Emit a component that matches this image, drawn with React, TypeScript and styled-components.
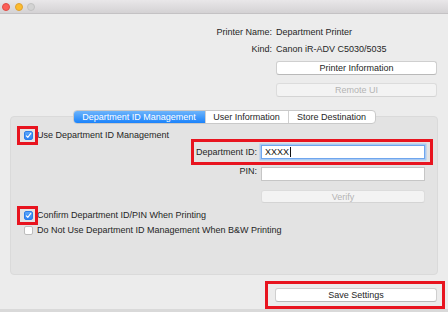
import React from 'react'
import styled, { createGlobalStyle } from 'styled-components'

const GlobalStyle = createGlobalStyle`
  html, body {
    margin: 0;
    padding: 0;
    background: #ececec;
  }
  body {
    font-family: "Liberation Sans", Arial, sans-serif;
    font-size: 9px;
    color: #262626;
  }
`

const RED = '#e8141f'

const StyledWindow = styled.div`
  width: 448px;
  height: 312px;
  display: flex;
  flex-direction: column;
  background: #ececec;
  overflow: hidden;
  position: relative;
`

const StyledTitleBar = styled.div`
  height: 13px;
  flex: none;
  display: flex;
  align-items: center;
  gap: 4.5px;
  padding-left: 2px;
  background: linear-gradient(#e9e7e9, #d4d2d4);
  border-bottom: 1px solid #c4c2c4;
`

const StyledLight = styled.span<{ $fill: string; $edge: string }>`
  width: 8px;
  height: 8px;
  border-radius: 50%;
  background: ${p => p.$fill};
  border: 0.5px solid ${p => p.$edge};
  box-sizing: border-box;
`

const StyledInfo = styled.div`
  display: grid;
  grid-template-columns: 272px 161px;
  column-gap: 4px;
  padding-top: 10px;
`

const StyledLabel = styled.div`
  text-align: right;
  line-height: 17px;
  white-space: nowrap;
`

const StyledValue = styled.div`
  line-height: 17px;
  white-space: nowrap;
`

const StyledButton = styled.div<{ $disabled?: boolean; $top?: number; $height?: number }>`
  height: ${p => p.$height ?? 14}px;
  margin-top: ${p => p.$top ?? 0}px;
  box-sizing: border-box;
  display: flex;
  align-items: center;
  justify-content: center;
  background: ${p => (p.$disabled ? '#f3f3f3' : '#ffffff')};
  border: 1px solid ${p => (p.$disabled ? '#dcdcdc' : '#cfcfcf')};
  border-bottom-color: ${p => (p.$disabled ? '#d4d4d4' : '#b9b9b9')};
  border-radius: 3px;
  color: ${p => (p.$disabled ? '#b4b4b4' : '#262626')};
  white-space: nowrap;
`

const StyledPanel = styled.div`
  margin: 19px 10px 0;
  height: 159px;
  box-sizing: border-box;
  background: #e3e3e3;
  border: 1px solid #dadada;
  border-radius: 4px;
  display: flex;
  flex-direction: column;
`

const StyledTabs = styled.div`
  align-self: center;
  margin-top: -7px;
  height: 14px;
  display: flex;
  background: #ffffff;
  border: 1px solid #c9c9c9;
  border-radius: 4px;
  box-sizing: border-box;
  overflow: hidden;
`

const StyledTab = styled.div<{ $active?: boolean; $width: number }>`
  width: ${p => p.$width}px;
  display: flex;
  align-items: center;
  justify-content: center;
  white-space: nowrap;
  color: ${p => (p.$active ? '#ffffff' : '#262626')};
  background: ${p => (p.$active ? 'linear-gradient(#6db4fb, #1b83fb)' : 'transparent')};
  border-left: ${p => (p.$active ? 'none' : '1px solid #d0d0d0')};
`

const StyledCheckRow = styled.div<{ $top: number }>`
  display: flex;
  align-items: center;
  gap: 4px;
  padding-left: 13px;
  margin-top: ${p => p.$top}px;
  height: 10px;
  white-space: nowrap;
`

const StyledBox = styled.span<{ $checked?: boolean; $marked?: boolean }>`
  position: relative;
  width: 9px;
  height: 9px;
  flex: none;
  box-sizing: border-box;
  border-radius: 2px;
  display: flex;
  align-items: center;
  justify-content: center;
  background: ${p => (p.$checked ? 'linear-gradient(#5aa6f8, #2f83f4)' : '#ffffff')};
  border: 0.5px solid ${p => (p.$checked ? '#2b7de9' : '#bdbdbd')};

  ${p =>
    p.$marked &&
    `
    &::after {
      content: '';
      position: absolute;
      left: -8px;
      top: -6px;
      right: -6px;
      bottom: -6px;
      border: 3px solid ${RED};
    }
  `}
`

const StyledForm = styled.div`
  display: grid;
  grid-template-columns: 1fr 164px;
  column-gap: 4px;
  padding-right: 12px;
  margin-top: 4px;
  align-items: center;
`

const StyledFieldLabel = styled.div`
  text-align: right;
  white-space: nowrap;
`

const StyledField = styled.div<{ $focused?: boolean; $top?: number }>`
  height: 14px;
  margin-top: ${p => p.$top ?? 0}px;
  box-sizing: border-box;
  background: #ffffff;
  border: 1px solid ${p => (p.$focused ? '#6fa6ee' : '#c6c6c6')};
  box-shadow: ${p => (p.$focused ? '0 0 0 1.5px #a9c9f2' : 'none')};
  display: flex;
  align-items: center;
  padding-left: 3px;
  font-size: 9px;
  color: #111;
`

const StyledCaret = styled.span`
  width: 1px;
  height: 10px;
  background: #111;
  margin-left: 0.5px;
`

const StyledMarkFrame = styled.div`
  grid-column: 1 / 3;
  grid-row: 1;
  margin: -5px -8px -5px 180px;
  height: 20px;
  border: 3px solid ${RED};
  pointer-events: none;
`

const StyledFooter = styled.div`
  display: flex;
  justify-content: flex-end;
  padding-right: 11px;
  margin-top: 13px;
`

const StyledSaveWrap = styled.div`
  position: relative;
  width: 162px;

  &::after {
    content: '';
    position: absolute;
    left: -10px;
    right: -8px;
    top: -7px;
    bottom: -7px;
    border: 3px solid ${RED};
  }
`

const StyledBottomEdge = styled.div`
  margin-top: auto;
  height: 3px;
  background: #d9d9d9;
`

const tabs = [
  { id: 1, label: 'Department ID Management', width: 131, active: true },
  { id: 2, label: 'User Information', width: 82 },
  { id: 3, label: 'Store Destination', width: 86 },
]

const Check = () => (
  <svg width="7" height="7" viewBox="0 0 7 7">
    <path d="M1.3 3.8 L2.8 5.3 L5.8 1.4" fill="none" stroke="#fff" strokeWidth="1.1" strokeLinecap="round" strokeLinejoin="round" />
  </svg>
)

const App = () => {
  return (
    <>
      <GlobalStyle />
      <StyledWindow>
        <StyledTitleBar>
          <StyledLight $fill="#fc5f57" $edge="#df4b44" />
          <StyledLight $fill="#fdbc2e" $edge="#dea032" />
          <StyledLight $fill="#d3d3d3" $edge="#c2c2c2" />
        </StyledTitleBar>

        <StyledInfo>
          <StyledLabel>Printer Name:</StyledLabel>
          <StyledValue>Department Printer</StyledValue>
          <StyledLabel>Kind:</StyledLabel>
          <StyledValue>Canon iR-ADV C5030/5035</StyledValue>
          <div />
          <StyledButton $top={3}>Printer Information</StyledButton>
          <div />
          <StyledButton $top={8} $disabled>Remote UI</StyledButton>
        </StyledInfo>

        <StyledPanel>
          <StyledTabs>
            {tabs.map(t => (
              <StyledTab key={t.id} $active={t.active} $width={t.width}>
                {t.label}
              </StyledTab>
            ))}
          </StyledTabs>

          <StyledCheckRow $top={6}>
            <StyledBox $checked $marked>
              <Check />
            </StyledBox>
            Use Department ID Management
          </StyledCheckRow>

          <StyledForm>
            <StyledMarkFrame />
            <StyledFieldLabel style={{ gridRow: 1, gridColumn: 1 }}>Department ID:</StyledFieldLabel>
            <StyledField $focused style={{ gridRow: 1, gridColumn: 2 }}>
              XXXX
              <StyledCaret />
            </StyledField>
            <StyledFieldLabel>PIN:</StyledFieldLabel>
            <StyledField $top={7} />
            <div />
            <StyledButton $top={9} $height={13} $disabled>Verify</StyledButton>
          </StyledForm>

          <StyledCheckRow $top={7}>
            <StyledBox $checked $marked>
              <Check />
            </StyledBox>
            Confirm Department ID/PIN When Printing
          </StyledCheckRow>

          <StyledCheckRow $top={5}>
            <StyledBox />
            Do Not Use Department ID Management When B&amp;W Printing
          </StyledCheckRow>
        </StyledPanel>

        <StyledFooter>
          <StyledSaveWrap>
            <StyledButton>Save Settings</StyledButton>
          </StyledSaveWrap>
        </StyledFooter>

        <StyledBottomEdge />
      </StyledWindow>
    </>
  )
}

export default App
